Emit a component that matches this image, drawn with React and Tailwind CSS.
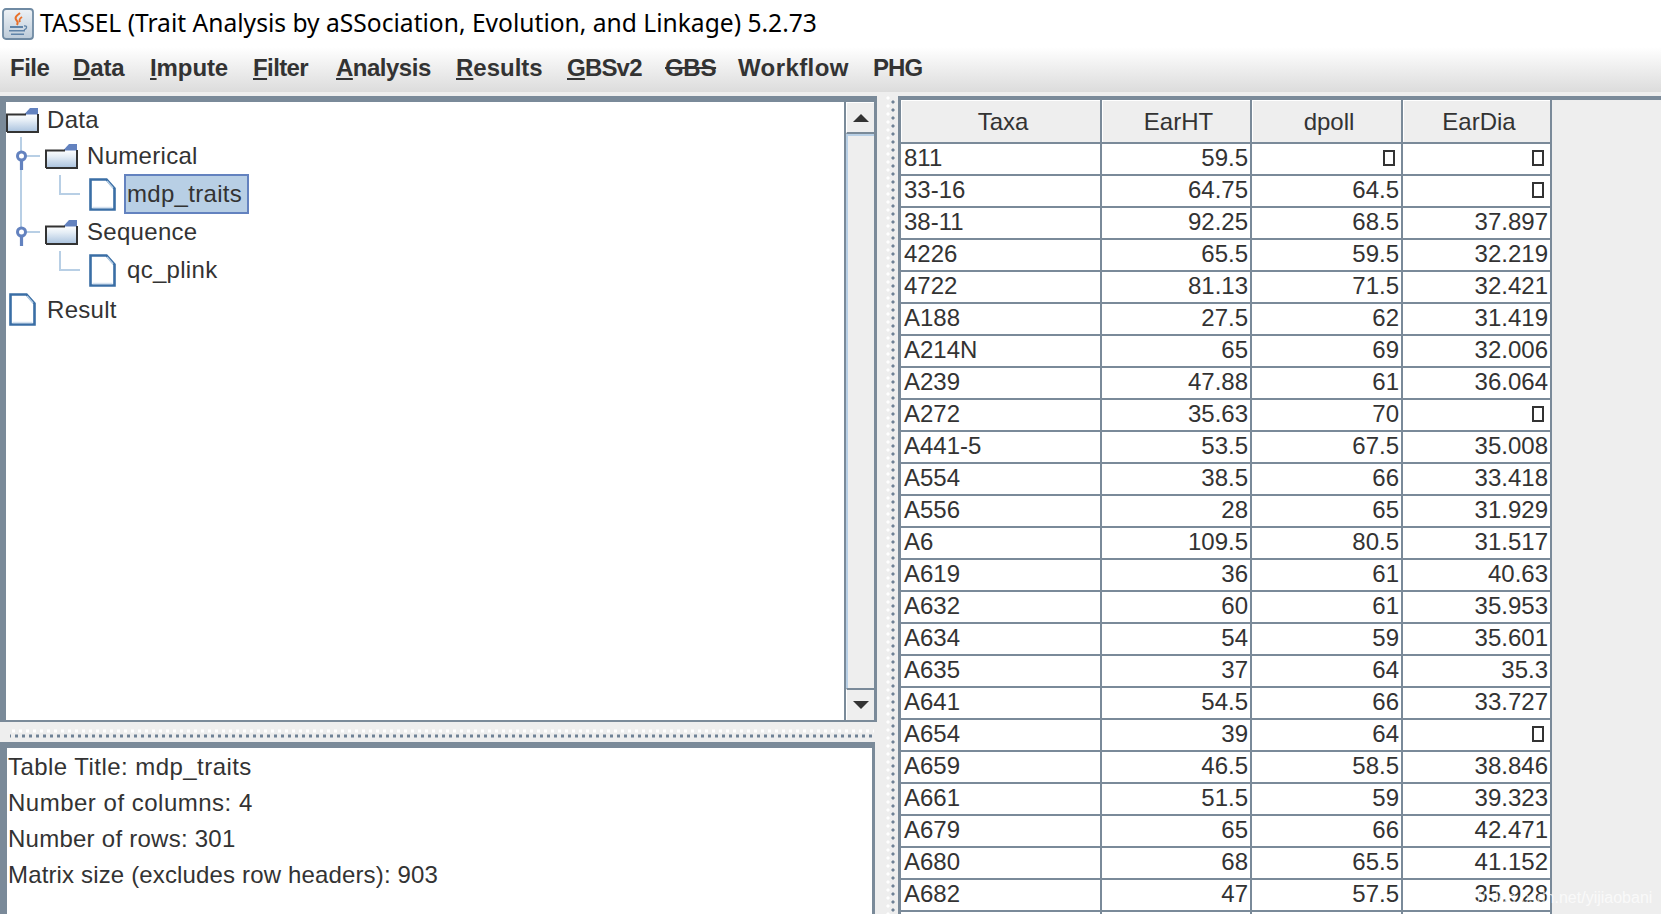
import React from "react";

const rows = [
  ["811", "59.5", null, null],
  ["33-16", "64.75", "64.5", null],
  ["38-11", "92.25", "68.5", "37.897"],
  ["4226", "65.5", "59.5", "32.219"],
  ["4722", "81.13", "71.5", "32.421"],
  ["A188", "27.5", "62", "31.419"],
  ["A214N", "65", "69", "32.006"],
  ["A239", "47.88", "61", "36.064"],
  ["A272", "35.63", "70", null],
  ["A441-5", "53.5", "67.5", "35.008"],
  ["A554", "38.5", "66", "33.418"],
  ["A556", "28", "65", "31.929"],
  ["A6", "109.5", "80.5", "31.517"],
  ["A619", "36", "61", "40.63"],
  ["A632", "60", "61", "35.953"],
  ["A634", "54", "59", "35.601"],
  ["A635", "37", "64", "35.3"],
  ["A641", "54.5", "66", "33.727"],
  ["A654", "39", "64", null],
  ["A659", "46.5", "58.5", "38.846"],
  ["A661", "51.5", "59", "39.323"],
  ["A679", "65", "66", "42.471"],
  ["A680", "68", "65.5", "41.152"],
  ["A682", "47", "57.5", "35.928"],
];

const menus = [
  { k: "", r: "File", w: "w-[63px] tracking-[-0.5px]" },
  { k: "D", r: "ata", w: "w-[77px] tracking-[-0.1px]" },
  { k: "I", r: "mpute", w: "w-[103px] tracking-[-0.1px]" },
  { k: "F", r: "ilter", w: "w-[83px] tracking-[-0.6px]" },
  { k: "A", r: "nalysis", w: "w-[120px] tracking-[-0.5px]" },
  { k: "R", r: "esults", w: "w-[111px]" },
  { k: "G", r: "BSv2", w: "w-[98px] tracking-[-0.8px]" },
  { k: "", r: "GBS", w: "w-[73px] tracking-[-0.3px]", strike: true },
  { k: "", r: "Workflow", w: "w-[135px] tracking-[0.4px]" },
  { k: "", r: "PHG", w: "w-[60px] tracking-[-0.9px]" },
];

function JavaIcon() {
  return (
    <svg width="32" height="32" viewBox="0 0 32 32" className="shrink-0">
      <defs>
        <linearGradient id="jb" x1="0" y1="0" x2="0" y2="1">
          <stop offset="0" stopColor="#eef2f6" />
          <stop offset="1" stopColor="#bccbd9" />
        </linearGradient>
      </defs>
      <rect x="1" y="1" width="30" height="30" rx="3" fill="url(#jb)" stroke="#6f8aa3" strokeWidth="1.8" />
      <path d="M18 5c-4 3-6 5-3 8 1 1 1 2 0 4M20 9c-3 2-3 3-2 5" fill="none" stroke="#e8702a" strokeWidth="2" />
      <path d="M8 18h13v2H8zM7 22h16v1.5H7zM9 25.5h13V27H9z" fill="#5f83a8" />
      <path d="M22 18c3-.5 4 2 0 4" fill="none" stroke="#5f83a8" strokeWidth="1.3" />
    </svg>
  );
}

function Folder() {
  return (
    <svg width="33" height="26" viewBox="0 0 33 26" className="shrink-0">
      <defs>
        <linearGradient id="fg" x1="0" y1="0" x2="0" y2="1">
          <stop offset="0" stopColor="#ffffff" />
          <stop offset="0.35" stopColor="#e6eef6" />
          <stop offset="1" stopColor="#a9c2de" />
        </linearGradient>
      </defs>
      <path d="M1 7h31v18H1z" fill="url(#fg)" />
      <path d="M19 6.5l5-5.5h8v6.5H19z" fill="#6382bf" />
      <path d="M1 25V7.5h19M1 25h31V7" fill="none" stroke="#333" strokeWidth="2" />
    </svg>
  );
}

function FileIcon() {
  return (
    <svg width="27" height="33" viewBox="0 0 27 33" className="shrink-0">
      <path d="M1.5 1.5h16l8 9v21h-24z" fill="#fff" stroke="#3a6ea5" strokeWidth="2.6" />
      <path d="M18 3l6 7" stroke="#b8cfe5" strokeWidth="1.4" />
      <path d="M3.5 29.5h20" stroke="#d5e2f0" strokeWidth="1.5" />
    </svg>
  );
}

function Lines({ kind }) {
  const c = "#b8cfe5";
  return (
    <svg width="80" height="38" viewBox="0 0 80 38" className="shrink-0">
      {(kind === "handle1" || kind === "pipe") && <path d="M15 0v38" stroke={c} strokeWidth="2" />}
      {kind === "handle2" && <path d="M15 0v19" stroke={c} strokeWidth="2" />}
      {(kind === "pipe" || kind === "last") && <path d="M54 0v19h20" fill="none" stroke={c} strokeWidth="2" />}
      {(kind === "handle1" || kind === "handle2") && (
        <g>
          <path d="M20 19h14" stroke={c} strokeWidth="2" />
          <circle cx="15.5" cy="19" r="4" fill="#fff" stroke="#6382bf" strokeWidth="3" />
          <path d="M15.5 23v10" stroke="#6382bf" strokeWidth="3.2" />
        </g>
      )}
    </svg>
  );
}

function Row({ h, children }) {
  return <div className={`flex items-center ${h}`}>{children}</div>;
}

function Missing() {
  return <span className="inline-block w-[12px] h-[16px] border-2 border-[#333] mr-[4px]" />;
}

function Cell({ v }) {
  return (
    <div className="h-[30px] flex items-center justify-end pr-[2px] pb-[2px] bg-white">
      {v === null ? <Missing /> : v}
    </div>
  );
}

export default function App() {
  return (
    <div className="relative w-[1661px] h-[914px] overflow-hidden flex flex-col bg-[#eeeeee] font-['Liberation_Sans',Arial,sans-serif] text-[#333] text-[24px]">
      {/* title bar */}
      <div className="h-[47px] shrink-0 bg-white flex items-center pl-[2px] gap-[6px] font-['Noto_Sans',sans-serif] text-[24.6px] text-black">
        <JavaIcon />
        <span>TASSEL (Trait Analysis by aSSociation, Evolution, and Linkage) 5.2.73</span>
      </div>
      {/* menu bar */}
      <div className="h-[49px] shrink-0 pl-[10px] pb-[4px] flex items-center bg-gradient-to-b from-white to-[#dcdcdc] font-bold text-[24px] text-[#333] border-b-4 border-b-[#eeeeee]">
        {menus.map((m) => (
          <div key={m.r} className={`${m.w} ${m.strike ? "line-through" : ""}`}>
            {m.k && <span className="underline">{m.k}</span>}
            {m.r}
          </div>
        ))}
      </div>
      {/* body */}
      <div className="flex-1 flex min-h-0">
        {/* left */}
        <div className="w-[882px] shrink-0 flex flex-col tracking-[0.3px]">
          <div className="h-[6px] shrink-0 w-[877px] bg-[#7a8a99]" />
          <div className="h-[620px] flex shrink-0 w-[877px]">
            <div className="w-[6px] bg-[#7a8a99]" />
            <div className="flex-1 flex flex-col border-b-2 border-b-[#7a8a99] bg-white">
              <div className="flex-1 flex min-h-0">
                <div className="flex-1 flex flex-col">
                  <Row h="h-[35px]">
                    <Folder />
                    <span className="ml-[8px]">Data</span>
                  </Row>
                  <Row h="h-[38px]">
                    <Lines kind="handle1" />
                    <div className="ml-[-41px]"><Folder /></div>
                    <span className="ml-[9px]">Numerical</span>
                  </Row>
                  <Row h="h-[38px]">
                    <Lines kind="pipe" />
                    <div className="ml-[3px]"><FileIcon /></div>
                    <span className="ml-[8px] h-[40px] pl-[1px] pr-[5px] flex items-center bg-[#b8cfe5] border-2 border-[#6382bf]">mdp_traits</span>
                  </Row>
                  <Row h="h-[38px]">
                    <Lines kind="handle2" />
                    <div className="ml-[-41px]"><Folder /></div>
                    <span className="ml-[9px]">Sequence</span>
                  </Row>
                  <Row h="h-[38px]">
                    <Lines kind="last" />
                    <div className="ml-[3px]"><FileIcon /></div>
                    <span className="ml-[11px]">qc_plink</span>
                  </Row>
                  <Row h="h-[41px]">
                    <div className="w-[3px]" />
                    <FileIcon />
                    <span className="ml-[11px]">Result</span>
                  </Row>
                </div>
                {/* scrollbar */}
                <div className="w-[33px] shrink-0 flex flex-col border-l-2 border-l-[#7a8a99] border-r-[3px] border-r-[#7a8a99]">
                  <div className="h-[32px] flex items-center justify-center bg-[#eeeeee] border-b-2 border-b-[#7a8a99] border-l border-l-white border-t border-t-white">
                    <div className="w-0 h-0 border-x-[8px] border-x-transparent border-b-[8px] border-b-[#333]" />
                  </div>
                  <div className="flex-1 bg-[#eeeeee] border-l-2 border-t-2 border-[#b8cfe5]" />
                  <div className="h-[32px] flex items-center justify-center bg-[#eeeeee] border-t-2 border-t-[#7a8a99] border-l border-l-white">
                    <div className="w-0 h-0 border-x-[8px] border-x-transparent border-t-[8px] border-t-[#333]" />
                  </div>
                </div>
              </div>
            </div>
          </div>
          {/* h splitter */}
          <div className="h-[2px] shrink-0 bg-[#eeeeee]" />
          <div className="h-[18px] shrink-0 flex items-center pl-[2px]">
            <div className="flex-1 h-full flex items-center px-[8px]">
              <div className="w-full h-[9px] [background-image:radial-gradient(circle,#6f8296_1.5px,transparent_1.7px),radial-gradient(circle,#ffffff_1.5px,transparent_1.7px)] [background-size:7px_9px] [background-position:3px_2.5px,0_-2.5px]" />
            </div>
          </div>
          <div className="h-[6px] shrink-0 w-[875px] bg-[#7a8a99]" />
          {/* info */}
          <div className="flex-1 flex w-[875px]">
            <div className="w-[7px] bg-[#7a8a99]" />
            <div className="flex-1 bg-white border-r-[3px] border-r-[#7a8a99] pl-[1px] pt-[1px] leading-[36px] tracking-[0.2px]">
              <div className="tracking-[0.45px]">Table Title: mdp_traits</div>
              <div className="tracking-[0.5px]">Number of columns: 4</div>
              <div className="tracking-[0.25px]">Number of rows: 301</div>
              <div className="tracking-[0.15px]">Matrix size (excludes row headers): 903</div>
            </div>
          </div>
        </div>
        {/* v splitter */}
        <div className="w-[16px] shrink-0 flex justify-center">
          <div className="w-[9px] h-full [background-image:radial-gradient(circle,#6f8296_1.5px,transparent_1.7px),radial-gradient(circle,#ffffff_1.5px,transparent_1.7px)] [background-size:9px_8px] [background-position:2.5px_2px,-2.5px_-2px]" />
        </div>
        {/* table */}
        <div className="flex-1 min-w-0 flex flex-col">
          <div className="h-[4px] shrink-0 bg-[#7a8a99]" />
          <div className="w-[654px] bg-[#7a8a99] pl-[3px] pr-[2px] grid grid-cols-[199px_148px_149px_147px] gap-x-[2px] gap-y-[2px]">
            {["Taxa", "EarHT", "dpoll", "EarDia"].map((h) => (
              <div key={h} className="h-[42px] pl-[4px] bg-[#eeeeee] border-t border-l border-white flex items-center justify-center">{h}</div>
            ))}
            {rows.map((r) => (
              <React.Fragment key={r[0]}>
                <div className="h-[30px] flex items-center pl-[3px] pb-[2px] bg-white">{r[0]}</div>
                <Cell v={r[1]} />
                <Cell v={r[2]} />
                <Cell v={r[3]} />
              </React.Fragment>
            ))}
            <div className="h-[2px] bg-white" />
            <div className="h-[2px] bg-white" />
            <div className="h-[2px] bg-white" />
            <div className="h-[2px] bg-white" />
          </div>
        </div>
      </div>
      {/* watermark */}
      <div className="absolute left-[1438px] top-[886px] text-[16px] text-white/70">https://blog.csdn.net/yijiaobani</div>
    </div>
  );
}
